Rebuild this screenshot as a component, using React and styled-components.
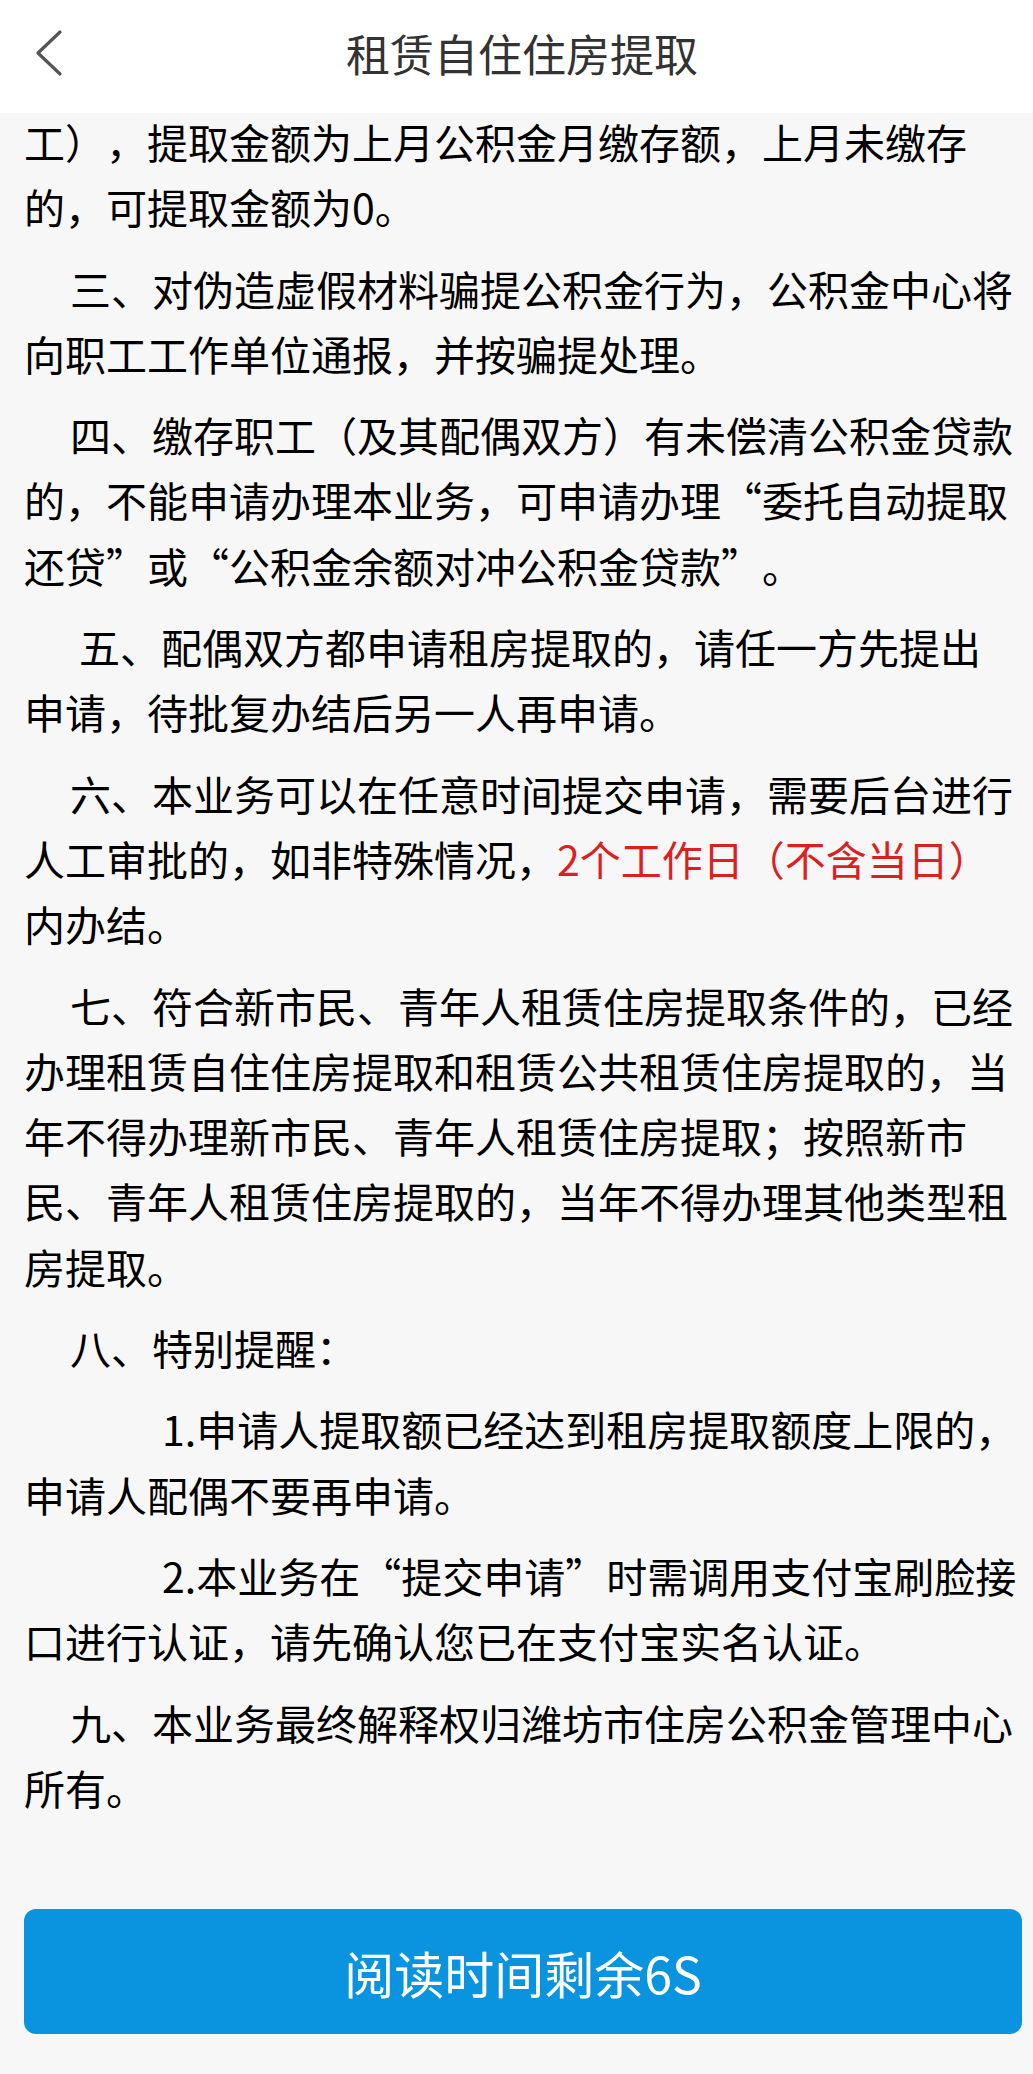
import React from 'react';
import styled, { createGlobalStyle } from 'styled-components';

const GlobalStyle = createGlobalStyle`
  html, body {
    margin: 0;
    padding: 0;
    background: #f7f7f7;
  }
  body {
    font-family: "Noto Sans CJK SC", "Noto Sans", sans-serif;
  }
`;

const Page = styled.div`
  width: 1033px;
  height: 2074px;
  display: flex;
  flex-direction: column;
  background: #f7f7f7;
  overflow: hidden;
`;

const Header = styled.header`
  position: relative;
  z-index: 1;
  flex: 0 0 113px;
  box-sizing: border-box;
  padding-bottom: 8px;
  background: #ffffff;
  display: grid;
  grid-template-columns: 1fr auto 1fr;
  align-items: center;
`;

const BackButton = styled.button`
  justify-self: start;
  margin-left: 32px;
  width: 34px;
  height: 50px;
  border: 0;
  padding: 0;
  background: none;
  display: flex;
  align-items: center;
  justify-content: center;
  cursor: pointer;
`;

const Title = styled.h1`
  margin: 0 0 0 11px;
  font-size: 44px;
  font-weight: 400;
  line-height: 1;
  color: #333333;
`;

const Content = styled.main`
  flex: 1;
  overflow: hidden;
  margin-top: -4px;
  padding: 0 0 0 24px;
`;

const Para = styled.p`
  margin: 0 0 16px;
  font-size: 41px;
  line-height: 65.3px;
  color: #000000;
  white-space: nowrap;
  text-indent: ${(p) => p.$indent || 0}px;
  text-spacing-trim: space-all;
`;

const Highlight = styled.span`
  color: #dc1f1f;
`;

const Footer = styled.footer`
  flex: 0 0 auto;
  padding: 0 11px 40px 24px;
`;

const ReadButton = styled.button`
  width: 100%;
  height: 125px;
  border: 0;
  border-radius: 12px;
  background: #0a94e0;
  color: #ffffff;
  font-family: inherit;
  font-size: 50px;
  font-weight: 400;
  cursor: pointer;
`;

const ChevronLeft = () => (
  <svg width="30" height="48" viewBox="0 0 30 48" fill="none">
    <polyline
      points="26,3 4,24 26,45"
      stroke="#555555"
      strokeWidth="3.2"
      strokeLinecap="round"
      strokeLinejoin="round"
    />
  </svg>
);

const paragraphs = [
  { indent: 0, lines: ['工），提取金额为上月公积金月缴存额，上月未缴存', '的，可提取金额为0。'] },
  { indent: 46, lines: ['三、对伪造虚假材料骗提公积金行为，公积金中心将', '向职工工作单位通报，并按骗提处理。'] },
  {
    indent: 46,
    lines: [
      '四、缴存职工（及其配偶双方）有未偿清公积金贷款',
      '的，不能申请办理本业务，可申请办理“委托自动提取',
      '还贷”或“公积金余额对冲公积金贷款”。',
    ],
  },
  { indent: 55, lines: ['五、配偶双方都申请租房提取的，请任一方先提出', '申请，待批复办结后另一人再申请。'] },
  {
    indent: 46,
    lines: [
      '六、本业务可以在任意时间提交申请，需要后台进行',
      <>
        人工审批的，如非特殊情况，<Highlight>2个工作日（不含当日）</Highlight>
      </>,
      '内办结。',
    ],
  },
  {
    indent: 46,
    lines: [
      '七、符合新市民、青年人租赁住房提取条件的，已经',
      '办理租赁自住住房提取和租赁公共租赁住房提取的，当',
      '年不得办理新市民、青年人租赁住房提取；按照新市',
      '民、青年人租赁住房提取的，当年不得办理其他类型租',
      '房提取。',
    ],
  },
  { indent: 46, lines: ['八、特别提醒：'] },
  { indent: 138, lines: ['1.申请人提取额已经达到租房提取额度上限的，', '申请人配偶不要再申请。'] },
  { indent: 138, lines: ['2.本业务在“提交申请”时需调用支付宝刷脸接', '口进行认证，请先确认您已在支付宝实名认证。'] },
  { indent: 46, lines: ['九、本业务最终解释权归潍坊市住房公积金管理中心', '所有。'] },
];

export default function App() {
  return (
    <>
      <GlobalStyle />
      <Page lang="zh-CN">
        <Header>
          <BackButton aria-label="返回">
            <ChevronLeft />
          </BackButton>
          <Title>租赁自住住房提取</Title>
          <span />
        </Header>
        <Content>
          {paragraphs.map((p, i) => (
            <Para key={i} $indent={p.indent}>
              {p.lines.map((line, j) => (
                <React.Fragment key={j}>
                  {j > 0 && <br />}
                  {line}
                </React.Fragment>
              ))}
            </Para>
          ))}
        </Content>
        <Footer>
          <ReadButton>阅读时间剩余6S</ReadButton>
        </Footer>
      </Page>
    </>
  );
}
